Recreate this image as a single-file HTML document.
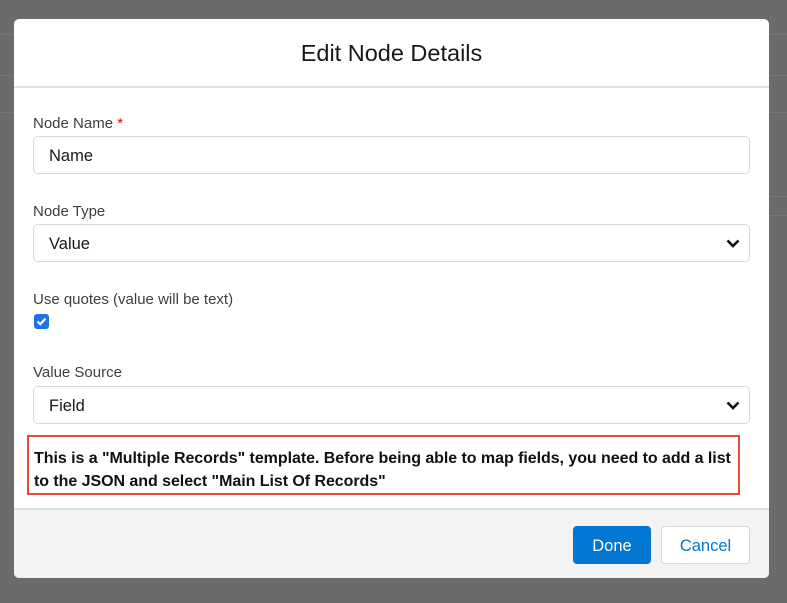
<!DOCTYPE html>
<html><head><style>
*{box-sizing:border-box;margin:0;padding:0}
body{width:787px;height:603px;background:#6b6b6b;font-family:"Liberation Sans",Arial,sans-serif;position:relative;overflow:hidden}
.bgl{position:absolute;left:0;width:14px;height:1px;background:#767676}
.bgr{position:absolute;left:769px;width:18px;height:1px;background:#767676}
.modal{position:absolute;left:14px;top:19px;width:755px;height:559px;background:#fff;border-radius:5px;overflow:hidden}
.hdr{height:69px;border-bottom:2px solid #e0e0e0;text-align:center;font-size:23.5px;color:#181818;line-height:68px}
.lbl{position:absolute;left:19px;font-size:15px;color:#3e3e3c}
.inp{position:absolute;left:19px;width:717px;height:38px;border:1px solid #d8d8d8;border-radius:5px;font-size:16.5px;color:#181818;padding-left:15px;line-height:39px}
.inp svg{position:absolute;right:9px;top:13px}
.cb{position:absolute;left:20px;top:295px;width:15px;height:15px;background:#1a73e8;border-radius:3px}
.warn{position:absolute;left:13px;top:416px;width:713px;height:60px;border:2px solid #ea4a33;padding:10px 5px;font-size:16px;font-weight:bold;color:#111;line-height:23px;white-space:nowrap;letter-spacing:-0.05px}
.ftr{position:absolute;left:0;top:489px;width:755px;height:70px;background:#f3f3f3;border-top:2px solid #dcdcdc}
.btn{position:absolute;top:16px;height:38px;border-radius:4px;font-size:16.5px;line-height:38px;text-align:center}
</style></head><body>
<div class="bgl" style="top:34px"></div><div class="bgl" style="top:75px"></div><div class="bgl" style="top:112px"></div>
<div class="bgr" style="top:34px"></div><div class="bgr" style="top:75px"></div><div class="bgr" style="top:112px"></div><div class="bgr" style="top:196px"></div><div class="bgr" style="top:215px"></div>
<div class="modal">
<div class="hdr">Edit Node Details</div>
<div class="lbl" style="top:96px">Node Name <span style="color:#e00">*</span></div>
<div class="inp" style="top:117px">Name</div>
<div class="lbl" style="top:184px">Node Type</div>
<div class="inp" style="top:205px">Value<svg width="14" height="11" viewBox="0 0 14 11"><path d="M1.5 2.5l5.5 5.5 5.5-5.5" stroke="#111" stroke-width="2.6" fill="none"/></svg></div>
<div class="lbl" style="top:272px">Use quotes (value will be text)</div>
<div class="cb"><svg width="15" height="15" viewBox="0 0 15 15"><path d="M3.5 7.5l2.7 2.7 5.3-5.6" stroke="#fff" stroke-width="2.2" fill="none"/></svg></div>
<div class="lbl" style="top:345px">Value Source</div>
<div class="inp" style="top:367px">Field<svg width="14" height="11" viewBox="0 0 14 11"><path d="M1.5 2.5l5.5 5.5 5.5-5.5" stroke="#111" stroke-width="2.6" fill="none"/></svg></div>
<div class="warn">This is a "Multiple Records" template. Before being able to map fields, you need to add a list<br>to the JSON and select "Main List Of Records"</div>
<div class="ftr">
<div class="btn" style="left:559px;width:78px;background:#0176d3;color:#fff;border:1px solid #0176d3">Done</div>
<div class="btn" style="left:647px;width:89px;background:#fff;color:#0176d3;border:1px solid #d8d8d8">Cancel</div>
</div>
</div>
</body></html>
